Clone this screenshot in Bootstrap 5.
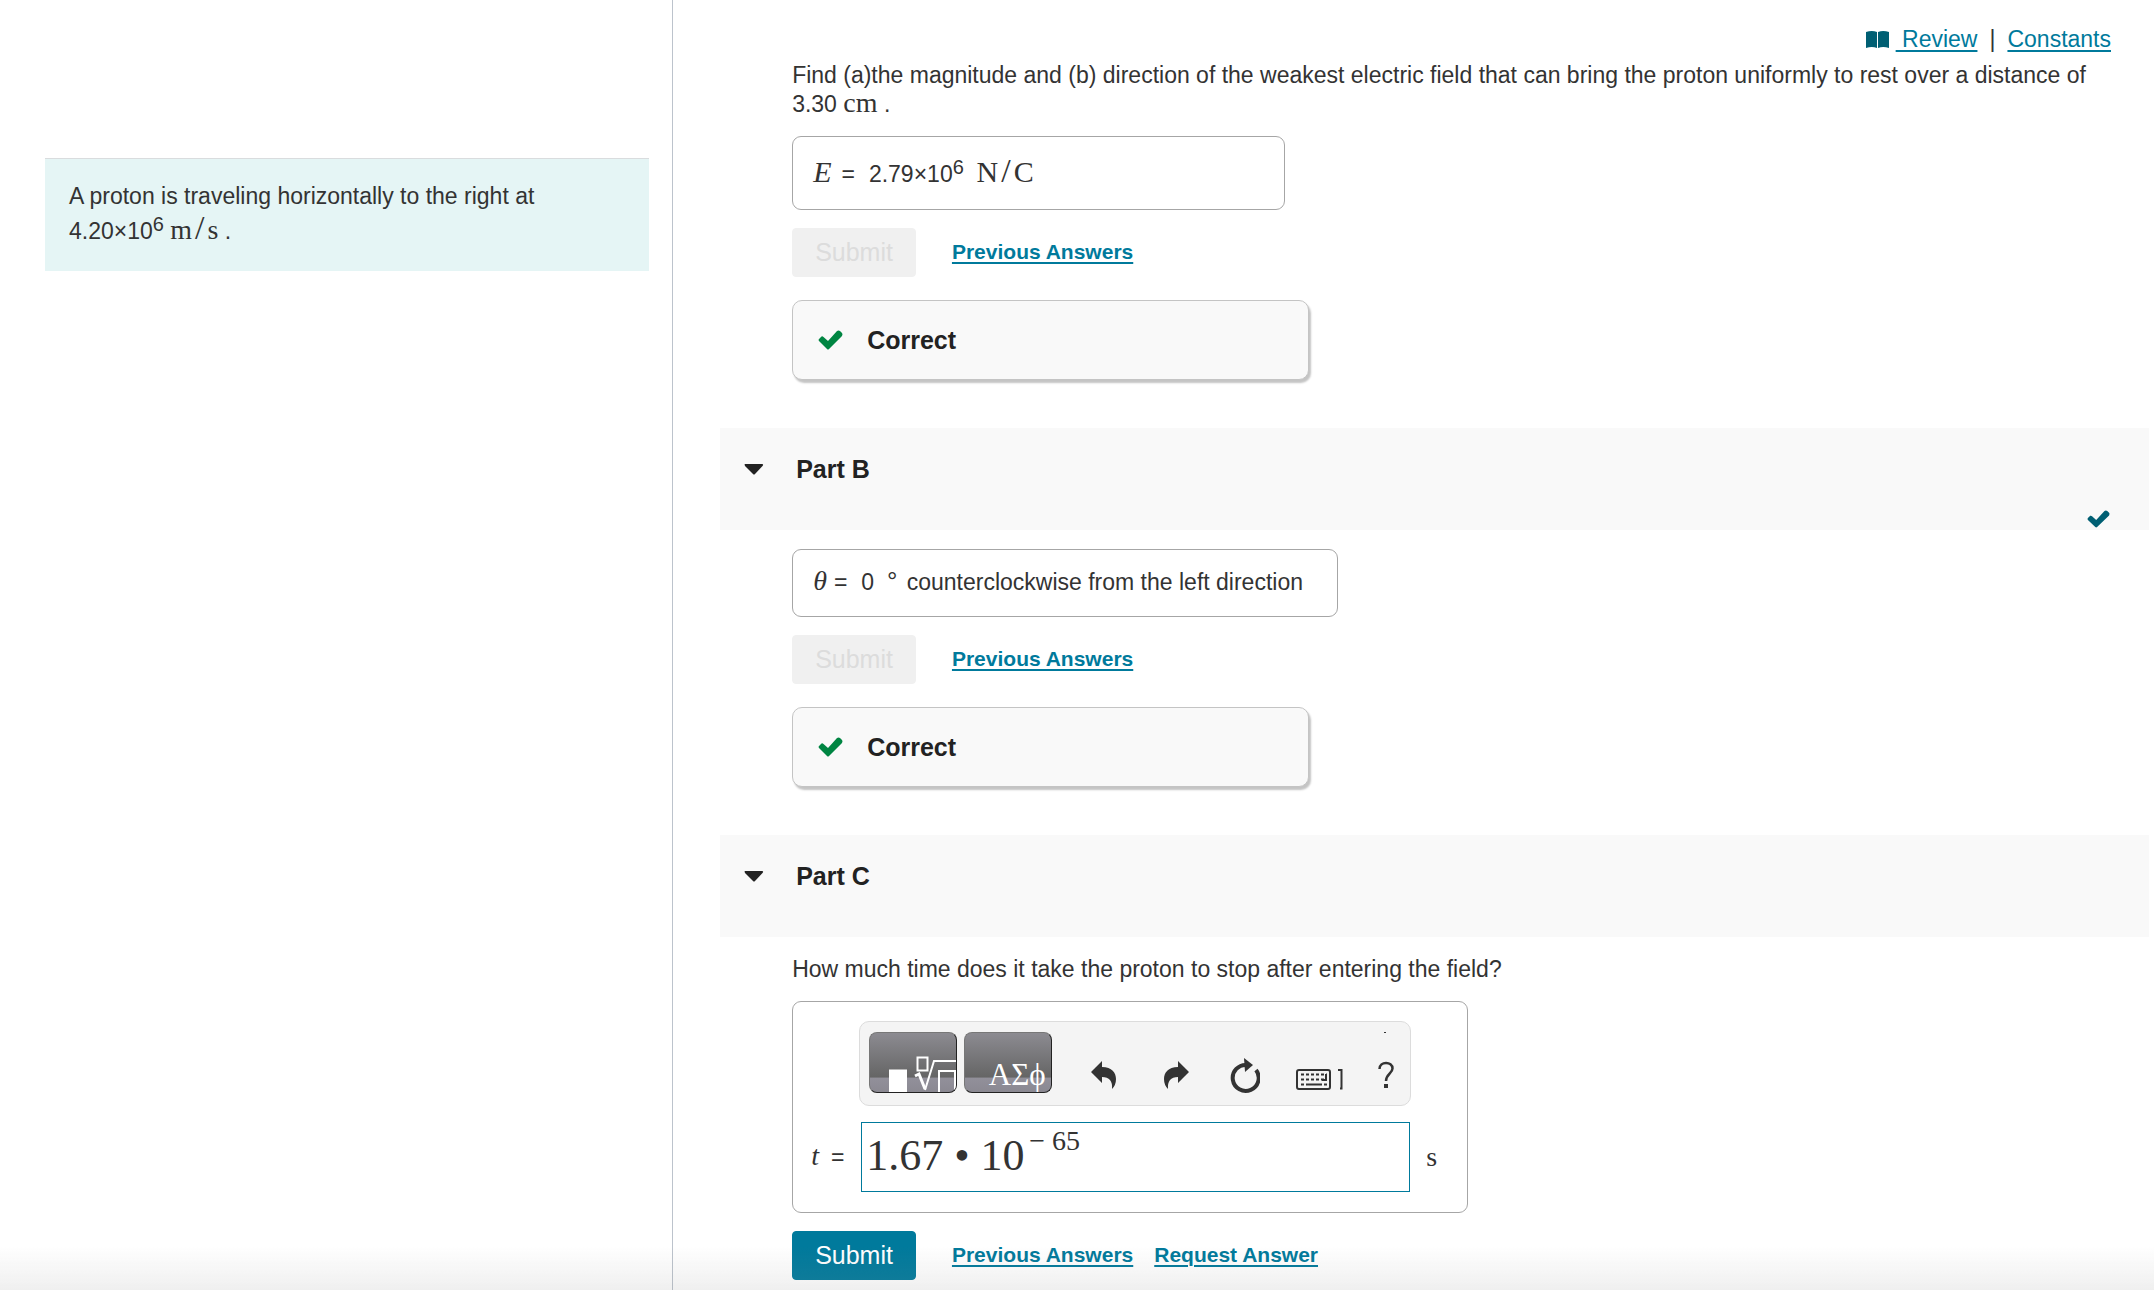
<!DOCTYPE html>
<html lang="en">
<head>
<meta charset="utf-8">
<meta name="viewport" content="width=device-width, initial-scale=1">
<title>Electric field problem</title>
<link href="https://cdn.jsdelivr.net/npm/bootstrap@5.3.0/dist/css/bootstrap.min.css" rel="stylesheet">
<style>
  body { font-family: "Liberation Sans", Arial, sans-serif; font-size: 23px; line-height: 29px; color: #333; background: #fff; }
  a { color: #007a9c; text-decoration-thickness: 2px; text-underline-offset: 3px; }
  sup { font-size: 20px; top: -8px; line-height: 0; }
  .intro-pane { width: 31.25%; border-right: 1px solid #bcc3cc; padding: 158px 23px 0 45px; }
  .intro-box { background: #e5f5f5; border-top: 1px solid #d9dcde; padding: 20px 20px 22px 24px; line-height: 35px; }
  .work-pane { padding: 25px 5px 0 47px; min-width: 0; }
  .indent { padding-left: 72px; padding-right: 38px; }
  .tools { margin-bottom: 7px; }
  .tools svg { width: 23px; height: 18px; margin-right: 7px; }
  .serif { font-family: "Liberation Serif", "Times New Roman", serif; font-size: 28px; line-height: 0; }
  .serif-lg { font-size: 30px; margin-right: 3px; }
  .slash { margin: 0 3px; font-size: 34px; line-height: 0; }
  .answer-box { border: 1px solid #a6a6a6; border-radius: 9px; padding: 18px 34px 19px 20px; width: fit-content; max-width: 100%; }
  .answer-e { width: 493px; padding-top: 23px; padding-bottom: 20px; margin-top: 17px; }
  .answer-theta { margin-top: 19px; }
  .eq { margin: 0 14px 0 7px; }
  .degree { font-size: 26px; line-height: 0; margin-right: 3px; }
  .actions { gap: 36px; margin-top: 18px; }
  .actions a { font-size: 21px; font-weight: 700; padding-bottom: 3px; }
  .action-links { gap: 21px; }
  .btn-answer { --bs-btn-bg: #007a9c; --bs-btn-border-color: #007a9c; --bs-btn-color: #fff; --bs-btn-hover-bg: #005f7a; --bs-btn-hover-color: #fff;
    --bs-btn-disabled-bg: #f0f0f0; --bs-btn-disabled-border-color: #f0f0f0; --bs-btn-disabled-color: #dcdcdc; --bs-btn-disabled-opacity: 1;
    --bs-btn-padding-x: 22px; --bs-btn-padding-y: 9px; --bs-btn-font-size: 25px; --bs-btn-line-height: 29px; --bs-btn-border-radius: 4px; }
  .feedback { width: 517px; max-width: 100%; height: 80px; margin-top: 23px; padding-left: 25px; gap: 24px; background: #f9f9f9; border: 1px solid #c4c4c4; border-radius: 10px; box-shadow: 2px 3px 2px #c4c4c4; color: #222; font-size: 25px; font-weight: 700; }
  .feedback svg { width: 25px; height: 20px; fill: #008542; }
  .part-bar { background: #f9f9f9; height: 102px; margin-top: 48px; padding: 27px 24px 0; }
  .part-title { font-size: 25px; line-height: 29px; font-weight: 700; color: #222; margin: 0; }
  .caret { border: 0; background: none; padding: 0; width: 52px; text-align: left; line-height: 0; }
  .part-done { position: absolute; right: 39px; bottom: 2px; width: 23px; height: 18px; fill: #005f73; }
  .question { padding-top: 18px; }
  .editor { padding: 19px 30px 20px 18px; margin-top: 17px; }
  .editor-grid { display: grid; grid-template-columns: 48px 552px auto; row-gap: 16px; }
  .toolbar { grid-column: 2; height: 85px; background: #f4f4f4; border: 1px solid #dcdcdc; border-radius: 10px; padding: 10px 0 0 9px; }
  .field-label { grid-column: 1; }
  .key { width: 88px; height: 61px; margin-right: 7px; padding: 0; border: 1px solid #777; border-right-color: #222; border-bottom-color: #222; border-radius: 8px; overflow: hidden; color: #fff; background: linear-gradient(#8c8b91, #656565 75%, #92909a 76%, #8b8992); }
  .key-greek { font-family: "Liberation Serif", serif; font-size: 31px; line-height: 29px; padding: 24px 0 0 18px; margin-right: 16px; }
  .tool { border: 0; background: none; padding: 26px 0 0; height: 61px; width: 72px; color: #333; line-height: 0; }
  .tool svg { height: 36px; }
  .tool-reset { width: 66px; }
  .tool-keys { width: 84px; }
  .tool-help { width: 48px; }
  .field { border: 1px solid #007a9c; margin: 0 1px 0 2px; height: 70px; padding-left: 4px; }
  .field input { border: 0; padding: 0; outline: 0; background: none; color: #333; font-family: "Liberation Serif", serif; }
  .field-base { width: 163px; height: 64px; font-size: 44px; }
  .field-exp { width: 120px; height: 36px; font-size: 28px; }
  .unit { padding-left: 15px; }
  .fade-foot { height: 44px; background: linear-gradient(#fff0, #8882); pointer-events: none; }
</style>
<script src="https://cdn.jsdelivr.net/npm/bootstrap@5.3.0/dist/js/bootstrap.bundle.min.js"></script>
</head>
<body>
<svg class="d-none">
  <symbol id="tick" viewBox="0 0 25 20" preserveAspectRatio="none"><path d="M1 9 3.500 6.500Q4.500 6 5.500 7L10 11 19 1Q20.500 0 22 1L24 3Q25 4 24 6L11 19Q10 20 9 19L1 11Q0 10 1 9Z"/></symbol>
  <symbol id="triangle" viewBox="0 0 20 12"><path d="M1 1H18Q20 1 18.500 3L11 11Q10 12 9 11L1 3Q0 1 1 1Z" fill="#222"/></symbol>
</svg>
<div class="d-flex min-vh-100">
  <aside class="intro-pane flex-shrink-0">
    <div class="intro-box">A proton is traveling horizontally to the right at<br>4.20×10<sup>6</sup> <span class="serif">m<span class="slash">/</span>s</span> .</div>
  </aside>
  <main class="work-pane flex-grow-1">
    <section>
      <div class="indent">
        <div class="tools d-flex justify-content-end align-items-center">
          <svg viewBox="0 0 23 18" aria-hidden="true"><path d="M0 1Q6-1 11 1V17Q6 15 0 17ZM12 1Q17-1 23 1V17Q17 15 12 17Z" fill="#005f73"/></svg>
          <span class="text-nowrap"><a href="#">&nbsp;Review</a><span class="px-2 mx-1">|</span><a href="#">Constants</a></span>
        </div>
        <div>Find (a)the magnitude and (b) direction of the weakest electric field that can bring the proton uniformly to rest over a distance of 3.30 <span class="serif">cm</span> .</div>
        <div class="answer-box answer-e"><i class="serif serif-lg">E</i><span class="eq">=</span>2.79×10<sup>6</sup>&nbsp; <span class="serif serif-lg">N<span class="slash">/</span>C</span></div>
        <div class="actions d-flex align-items-center"><button class="btn btn-answer" disabled>Submit</button><a href="#">Previous Answers</a></div>
        <div class="feedback d-flex align-items-center"><svg aria-hidden="true"><use href="#tick"/></svg>Correct</div>
      </div>
    </section>
    <section>
      <div class="part-bar position-relative d-flex align-items-start">
        <button class="caret" aria-label="Collapse Part B"><svg width="20" height="29"><use href="#triangle" y="8" width="20" height="12"/></svg></button>
        <h2 class="part-title">Part B</h2>
        <svg class="part-done" aria-hidden="true"><use href="#tick"/></svg>
      </div>
      <div class="indent">
        <div class="answer-box answer-theta"><i class="serif">θ</i><span class="eq">=</span>0 &nbsp;<span class="degree">°</span> counterclockwise from the left direction</div>
        <div class="actions d-flex align-items-center"><button class="btn btn-answer" disabled>Submit</button><a href="#">Previous Answers</a></div>
        <div class="feedback d-flex align-items-center"><svg aria-hidden="true"><use href="#tick"/></svg>Correct</div>
      </div>
    </section>
    <section>
      <div class="part-bar d-flex align-items-start">
        <button class="caret" aria-label="Collapse Part C"><svg width="20" height="29"><use href="#triangle" y="8" width="20" height="12"/></svg></button>
        <h2 class="part-title">Part C</h2>
      </div>
      <div class="indent">
        <div class="question">How much time does it take the proton to stop after entering the field?</div>
        <div class="answer-box editor">
          <div class="editor-grid align-items-center">
            <div class="toolbar d-flex align-items-start" role="toolbar" aria-label="Equation tools">
              <button class="key" aria-label="Templates"><svg class="d-block" width="86" height="59" viewBox="0 0 86 59" fill="none" stroke="#fff"><path d="M19 36.500H37V59H19Z" fill="#fff" stroke="none"/><path d="M47.500 24.500H57.500V37.500H47.500Z" stroke-width="2"/><path d="M45 43 49 41 55 56" stroke-width="3"/><path d="M55 57 64 28H86M69 59V38H85V59" stroke-width="2"/></svg></button>
              <button class="key key-greek" aria-label="Symbols">ΑΣϕ</button>
              <button class="tool" aria-label="Undo"><svg width="26" height="36" viewBox="0 0 26 36" fill="#333"><path d="M0 14 11 3V9C21 9 25 15 25 21Q25 27 21 31Q22 19 11 19V25Z"/></svg></button>
              <button class="tool" aria-label="Redo"><svg width="26" height="36" viewBox="0 0 26 36" fill="#333"><path d="M26 14 15 3V9C5 9 1 15 1 21Q1 27 5 31Q4 19 15 19V25Z"/></svg></button>
              <button class="tool tool-reset" aria-label="Reset"><svg width="30" height="36" viewBox="0 0 30 36"><path d="M17 7A13 13 0 1 0 26 12" fill="none" stroke="#333" stroke-width="4"/><path d="M14 0 23 7 15 14Z" fill="#333"/></svg></button>
              <button class="tool tool-keys" aria-label="Keyboard shortcuts"><svg width="48" height="36" viewBox="0 0 48 36" fill="none" stroke="#333" stroke-width="2"><rect x="1" y="12" width="33" height="19" rx="2"/><path d="M5 16.500H31M5 21.500H28M5 26.500H8M28 26.500H31" stroke-dasharray="3 2"/><path d="M10 26.500H26M30 16V22H26"/><path d="M42 12H45.500V30.500H44"/></svg></button>
              <button class="tool tool-help pt-0" aria-label="Help"><svg width="16" height="62" viewBox="0 -26 16 62" style="height:62px"><path d="M6 -26H8V-25H6Z" fill="#333"/><path d="M1.500 11C1.500 3 14.500 3 14.500 10.500C14.500 15 8 16 8 23" fill="none" stroke="#333" stroke-width="2.500"/><path d="M6 26H10V30H6Z" fill="#333"/></svg></button>
            </div>
            <label class="field-label" for="time-base"><i class="serif">t</i><span class="ms-2 ps-1">=</span></label>
            <div class="field d-flex align-items-start"><input class="field-base" id="time-base" type="text" value="1.67 • 10"><input class="field-exp" type="text" value="− 65" aria-label="Exponent"></div>
            <span class="serif unit">s</span>
          </div>
        </div>
        <div class="actions d-flex align-items-center"><button class="btn btn-answer">Submit</button><div class="action-links d-flex"><a href="#">Previous Answers</a><a href="#">Request Answer</a></div></div>
      </div>
    </section>
  </main>
</div>
<div class="fade-foot fixed-bottom"></div>
</body>
</html>
